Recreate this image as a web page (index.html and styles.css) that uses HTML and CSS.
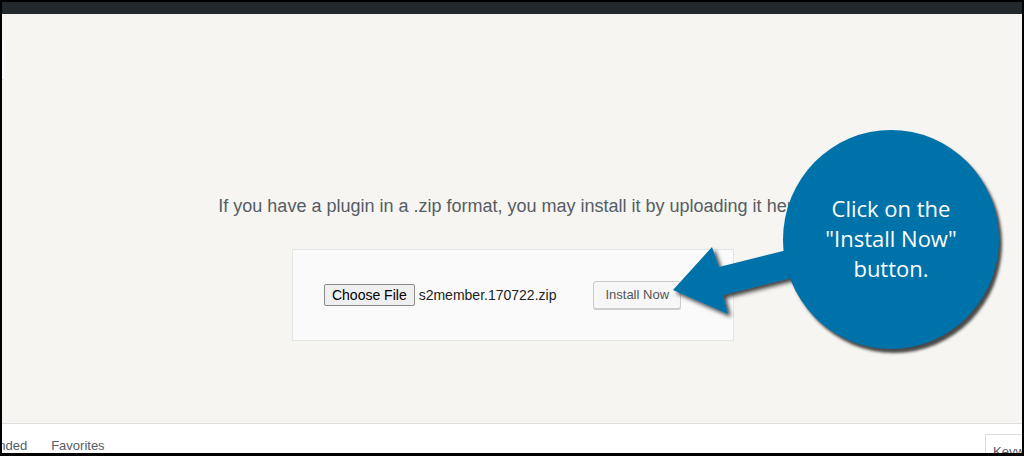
FILE: index.html
```html
<!DOCTYPE html>
<html lang="en">
<head>
<meta charset="utf-8">
<title>Upload Plugin</title>
<link rel="stylesheet" href="styles.css">
</head>
<body>
<div class="frame">
  <div class="adminbar"></div>
  <div class="main">
    <div class="sidebar-edge"><div class="sidebar-piece"></div></div>
    <div class="content">
      <p class="install-help">If you have a plugin in a .zip format, you may install it by uploading it here.</p>
      <form class="upload-form">
        <span class="file-btn">Choose File</span>
        <span class="file-name">s2member.170722.zip</span>
        <span class="install-btn">Install Now</span>
      </form>
    </div>
  </div>
  <div class="bottom">
    <ul class="tabs">
      <li class="tab tab-cut">Recommended</li>
      <li class="tab">Favorites</li>
    </ul>
    <div class="search">Keyword</div>
  </div>

  <svg class="arrow" width="1024" height="456" viewBox="0 0 1024 456" aria-hidden="true">
    <defs>
      <filter id="sh" x="-20%" y="-20%" width="140%" height="140%">
        <feDropShadow dx="3" dy="3" stdDeviation="2" flood-color="#000" flood-opacity="0.75"/>
      </filter>
    </defs>
    <polygon points="673,290 712,247 719,267 815,243 815,272 723,295 728,314" fill="#0072aa" filter="url(#sh)"/>
  </svg>
  <div class="callout">
    <span>Click on the</span>
    <span>"Install Now"</span>
    <span>button.</span>
  </div>
</div>
</body>
</html>
```

FILE: styles.css
```css
html, body {
  margin: 0;
  padding: 0;
}
body {
  background: #000;
  width: 1024px;
  height: 456px;
  overflow: hidden;
  font-family: "Liberation Sans", Arial, sans-serif;
}
.frame {
  position: relative;
  margin: 2px 0 0 2px;
  width: 1020px;
  height: 451px;
  overflow: hidden;
  background: #fff;
  display: flex;
  flex-direction: column;
}
.adminbar {
  height: 12px;
  background: #23282d;
  flex: none;
}
.main {
  height: 409px;
  flex: none;
  background: #f6f5f1;
  border-bottom: 1px solid #dedede;
  display: flex;
}
.sidebar-edge {
  width: 2px;
  flex: none;
}
.sidebar-piece {
  margin-top: 26px;
  height: 39px;
  background: #fff;
  border-bottom: 1px solid #e2e2e2;
}
.content {
  flex: 1;
  padding-top: 182px;
  text-align: center;
}
.install-help {
  margin: 0 0 32px;
  font-size: 18px;
  line-height: 21px;
  color: #555d66;
}
.upload-form {
  display: inline-flex;
  align-items: center;
  margin: 0;
  padding: 31px 52px 31px 31px;
  background: #fafafa;
  border: 1px solid #e5e5e5;
  height: 28px;
}
.file-btn {
  display: inline-block;
  font-size: 14px;
  line-height: 20px;
  padding: 0 7px;
  color: #000;
  background: #efefef;
  border: 1px solid #8a8a8a;
  border-radius: 2px;
}
.file-name {
  margin-left: 4px;
  font-size: 14px;
  line-height: 20px;
  color: #222;
}
.install-btn {
  margin-left: 37px;
  display: inline-block;
  font-size: 13px;
  line-height: 26px;
  padding: 0 11px;
  color: #555;
  background: #f7f7f7;
  border: 1px solid #ccc;
  border-radius: 3px;
  box-shadow: 0 1px 0 #ccc;
}
.bottom {
  flex: 1;
  display: flex;
  justify-content: space-between;
  align-items: flex-start;
}
.tabs {
  list-style: none;
  margin: 0;
  padding: 13px 0 0;
  display: flex;
  gap: 24px;
}
.tab {
  font-size: 13px;
  line-height: 18px;
  color: #555d66;
}
.tab-cut {
  margin-left: -63px;
}
.search {
  margin-top: 10px;
  margin-right: -43px;
  width: 80px;
  box-sizing: border-box;
  padding: 8px 7px;
  font-size: 13px;
  line-height: 18px;
  color: #555d66;
  background: #fff;
  border: 1px solid #ddd;
  white-space: nowrap;
  overflow: hidden;
}
.arrow {
  position: absolute;
  left: -2px;
  top: -2px;
  pointer-events: none;
}
.callout {
  position: absolute;
  left: 781px;
  top: 128px;
  width: 216px;
  height: 219px;
  border-radius: 50%;
  background: #0072aa;
  box-shadow: 3px 4px 3px rgba(0, 0, 0, 0.7);
  display: flex;
  flex-direction: column;
  align-items: center;
  justify-content: center;
  padding-bottom: 4px;
  box-sizing: border-box;
  font-family: "Open Sans", sans-serif;
  font-size: 22px;
  line-height: 30px;
  color: #fff;
}
```
